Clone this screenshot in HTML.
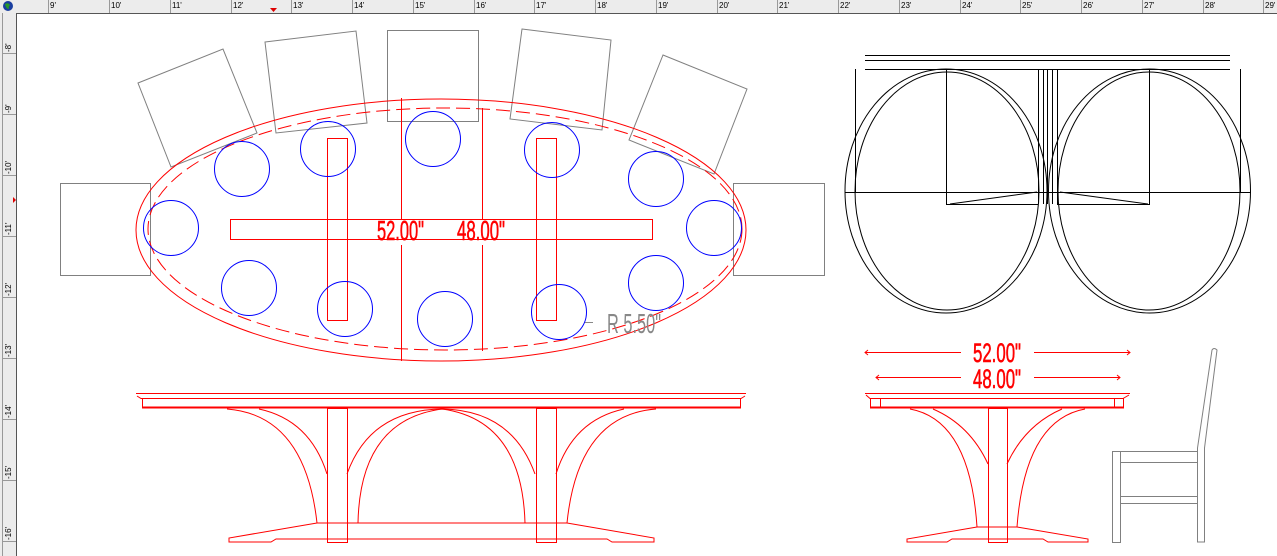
<!DOCTYPE html>
<html><head><meta charset="utf-8"><style>
html,body{margin:0;padding:0;background:#fff;overflow:hidden}
svg{display:block}
</style></head><body>
<svg width="1277" height="556" viewBox="0 0 1277 556" xmlns="http://www.w3.org/2000/svg" font-family="Liberation Sans, sans-serif">
<rect x="0" y="0" width="1277" height="13" fill="#ececec"/>
<rect x="0" y="0" width="16" height="556" fill="#ececec"/>
<line x1="16" y1="13.5" x2="1277" y2="13.5" stroke="#555" stroke-width="1"/>
<line x1="16.5" y1="13" x2="16.5" y2="556" stroke="#555" stroke-width="1"/>
<line x1="2.5" y1="13" x2="2.5" y2="556" stroke="#999" stroke-width="1"/>
<g stroke="#999" stroke-width="1">
<line x1="48.5" y1="0" x2="48.5" y2="13"/><line x1="109.5" y1="0" x2="109.5" y2="13"/><line x1="170.5" y1="0" x2="170.5" y2="13"/><line x1="231.5" y1="0" x2="231.5" y2="13"/><line x1="291.5" y1="0" x2="291.5" y2="13"/><line x1="352.5" y1="0" x2="352.5" y2="13"/><line x1="413.5" y1="0" x2="413.5" y2="13"/><line x1="474.5" y1="0" x2="474.5" y2="13"/><line x1="534.5" y1="0" x2="534.5" y2="13"/><line x1="595.5" y1="0" x2="595.5" y2="13"/><line x1="656.5" y1="0" x2="656.5" y2="13"/><line x1="717.5" y1="0" x2="717.5" y2="13"/><line x1="777.5" y1="0" x2="777.5" y2="13"/><line x1="838.5" y1="0" x2="838.5" y2="13"/><line x1="899.5" y1="0" x2="899.5" y2="13"/><line x1="960.5" y1="0" x2="960.5" y2="13"/><line x1="1020.5" y1="0" x2="1020.5" y2="13"/><line x1="1081.5" y1="0" x2="1081.5" y2="13"/><line x1="1142.5" y1="0" x2="1142.5" y2="13"/><line x1="1203.5" y1="0" x2="1203.5" y2="13"/><line x1="1263.5" y1="0" x2="1263.5" y2="13"/>
<line x1="2" y1="53.5" x2="16" y2="53.5"/><line x1="2" y1="114.5" x2="16" y2="114.5"/><line x1="2" y1="175.5" x2="16" y2="175.5"/><line x1="2" y1="236.5" x2="16" y2="236.5"/><line x1="2" y1="297.5" x2="16" y2="297.5"/><line x1="2" y1="358.5" x2="16" y2="358.5"/><line x1="2" y1="419.5" x2="16" y2="419.5"/><line x1="2" y1="480.5" x2="16" y2="480.5"/><line x1="2" y1="541.5" x2="16" y2="541.5"/>
</g>
<g font-size="8" fill="#000">
<text x="50" y="8">9'</text><text x="111" y="8">10'</text><text x="172" y="8">11'</text><text x="233" y="8">12'</text><text x="293" y="8">13'</text><text x="354" y="8">14'</text><text x="415" y="8">15'</text><text x="476" y="8">16'</text><text x="536" y="8">17'</text><text x="597" y="8">18'</text><text x="658" y="8">19'</text><text x="719" y="8">20'</text><text x="779" y="8">21'</text><text x="840" y="8">22'</text><text x="901" y="8">23'</text><text x="962" y="8">24'</text><text x="1022" y="8">25'</text><text x="1083" y="8">26'</text><text x="1144" y="8">27'</text><text x="1205" y="8">28'</text><text x="1265" y="8">29'</text>
<text transform="translate(11,52) rotate(-90)">-8'</text>
<text transform="translate(11,113) rotate(-90)">-9'</text>
<text transform="translate(11,174) rotate(-90)">-10'</text>
<text transform="translate(11,235) rotate(-90)">-11'</text>
<text transform="translate(11,296) rotate(-90)">-12'</text>
<text transform="translate(11,357) rotate(-90)">-13'</text>
<text transform="translate(11,418) rotate(-90)">-14'</text>
<text transform="translate(11,479) rotate(-90)">-15'</text>
<text transform="translate(11,540) rotate(-90)">-16'</text>
</g>
<circle cx="8" cy="6" r="5" fill="#1a3fa0"/><path d="M5,4 q3,-2 5,1 q-2,2 -1,4 q-3,0 -4,-5z" fill="#2a9a2a"/>
<polygon points="270,8 277,8 273.5,12" fill="#d00"/>
<polygon points="13,197 16,200 13,203" fill="#d00"/>

<g fill="none" stroke="#808080" stroke-width="1">
<rect x="60.5" y="183.5" width="90" height="92"/>
<rect x="733.5" y="183.5" width="91" height="92"/>
<polygon points="138,83 223,49 257,133 171,167"/>
<polygon points="265,42 356,31 367,123 276,133"/>
<polygon points="387.5,30.5 478.5,30.5 478.5,121.5 387.5,121.5"/>
<polygon points="522,29 611,40 602,130 510,119"/>
<polygon points="663,55 747,89 714,174 629,140"/>
</g>
<g fill="none" stroke="#f00" stroke-width="1">
<ellipse cx="441" cy="230" rx="305" ry="131"/>
<ellipse cx="445" cy="229" rx="297" ry="121" stroke-dasharray="14,6"/>
<rect x="230.5" y="219.5" width="422" height="20"/>
<rect x="327.5" y="138.5" width="20" height="182"/>
<rect x="536.5" y="138.5" width="20" height="182"/>
<path d="M401.5,98 V219 M401.5,245 V361"/>
<path d="M482.5,108 V219 M482.5,245 V351"/>
</g>
<g fill="none" stroke="#00f" stroke-width="1">
<circle cx="171" cy="228" r="27.5"/><circle cx="242" cy="169" r="27.5"/><circle cx="328" cy="149" r="27.5"/><circle cx="433" cy="139" r="27.5"/><circle cx="552" cy="150" r="27.5"/><circle cx="656" cy="179" r="27.5"/><circle cx="714" cy="228" r="27.5"/><circle cx="656" cy="283" r="27.5"/><circle cx="559" cy="312" r="27.5"/><circle cx="445" cy="319" r="27.5"/><circle cx="345" cy="309" r="27.5"/><circle cx="249" cy="288" r="27.5"/>
</g>
<g fill="#f00" font-size="28" stroke="#f00" stroke-width="0.6">
<text x="377" y="240" textLength="47" lengthAdjust="spacingAndGlyphs">52.00"</text>
<text x="457" y="240" textLength="48" lengthAdjust="spacingAndGlyphs">48.00"</text>
</g>
<line x1="585" y1="322.5" x2="593" y2="322.5" stroke="#888"/>
<text x="607" y="333" fill="#888" font-size="28" textLength="54" lengthAdjust="spacingAndGlyphs">R 5.50"</text>

<g fill="none" stroke="#f00" stroke-width="1">
<path d="M136,393.5 H746 M137,396 L141,398.5 H741 L745,396"/>
<rect x="142.5" y="398.5" width="598" height="9"/>
<line x1="142" y1="407.5" x2="741" y2="407.5" stroke-width="2"/>
<rect x="327.5" y="408.5" width="20" height="134"/>
<rect x="536.5" y="408.5" width="20" height="134"/>
<path d="M227,409 Q305,415 317,523"/>
<path d="M259,409 Q310,420 327,474"/>
<path d="M347,474 Q370,410 442,409 Q512,410 535,474"/>
<path d="M358,523 Q360,420 442,409 Q522,420 525,523"/>
<path d="M656,409 Q578,415 567,523"/>
<path d="M624,409 Q573,420 556,474"/>
<path d="M317,523 H567"/>
<path d="M317,523 L229,538 V542 H271 L276,539 H607 L612,542 H654 V538 L567,523"/>
</g>

<g fill="none" stroke="#000" stroke-width="1">
<path d="M865,55.5 H1230 M865,60.5 H1230 M865,69.5 H1230"/>
<path d="M855.5,69 V192 M1240.5,69 V192"/>
<ellipse cx="946" cy="191" rx="101" ry="122"/>
<ellipse cx="947" cy="191" rx="92" ry="119"/>
<ellipse cx="1149.5" cy="191" rx="101" ry="122"/>
<ellipse cx="1149" cy="191" rx="91" ry="119"/>
<path d="M845,192.5 H1251"/>
<path d="M946.5,69 V204.5 H1038 M1149.5,69 V204.5 H1057"/>
<path d="M1038.5,69 V204 M1043.5,69 V204 M1047.5,69 V204 M1052.5,69 V204 M1057.5,69 V204"/>
<path d="M950,204 L1037,192 M1060,192 L1148,204"/>
</g>

<g stroke="#f00" stroke-width="1" fill="none">
<path d="M865,352.5 H961 M1034,352.5 H1130 M876,377.5 H961 M1034,377.5 H1120"/>
<path d="M868,350 L865,352.5 L868,355 M1127,350 L1130,352.5 L1127,355 M879,375 L876,377.5 L879,380 M1117,375 L1120,377.5 L1117,380"/>
</g>
<g fill="#f00" font-size="27" stroke="#f00" stroke-width="0.6">
<text x="973" y="362" textLength="48" lengthAdjust="spacingAndGlyphs">52.00"</text>
<text x="973" y="388" textLength="48" lengthAdjust="spacingAndGlyphs">48.00"</text>
</g>
<g fill="none" stroke="#f00" stroke-width="1">
<path d="M865,393.5 H1130 M866,395 L870,398.5 H1123 L1129,395"/>
<rect x="870.5" y="398.5" width="253" height="9"/>
<line x1="870" y1="407.5" x2="1124" y2="407.5" stroke-width="2"/>
<path d="M880.5,398 V408 M1114.5,398 V408"/>
<rect x="988.5" y="408.5" width="19" height="134"/>
<path d="M910,409 Q970,420 977,527"/>
<path d="M933,409 Q970,425 988,464"/>
<path d="M1085,409 Q1025,420 1017,527"/>
<path d="M1062,409 Q1025,425 1007,464"/>
<path d="M977,527 H1017"/>
<path d="M977,527 L907,539 V542 H947 L952,539 H1043 L1048,542 H1088 V539 L1017,527"/>
</g>
<g fill="none" stroke="#808080" stroke-width="1">
<path d="M1197.5,542 V448 L1212,350 Q1214,347 1217,350 L1204.5,448 V542 Z"/>
<rect x="1112.5" y="451.5" width="8" height="91"/>
<path d="M1120,451.5 H1197 M1120,462.5 H1197 M1120,496.5 H1197 M1120,503.5 H1197"/>
</g>
</svg>
</body></html>
